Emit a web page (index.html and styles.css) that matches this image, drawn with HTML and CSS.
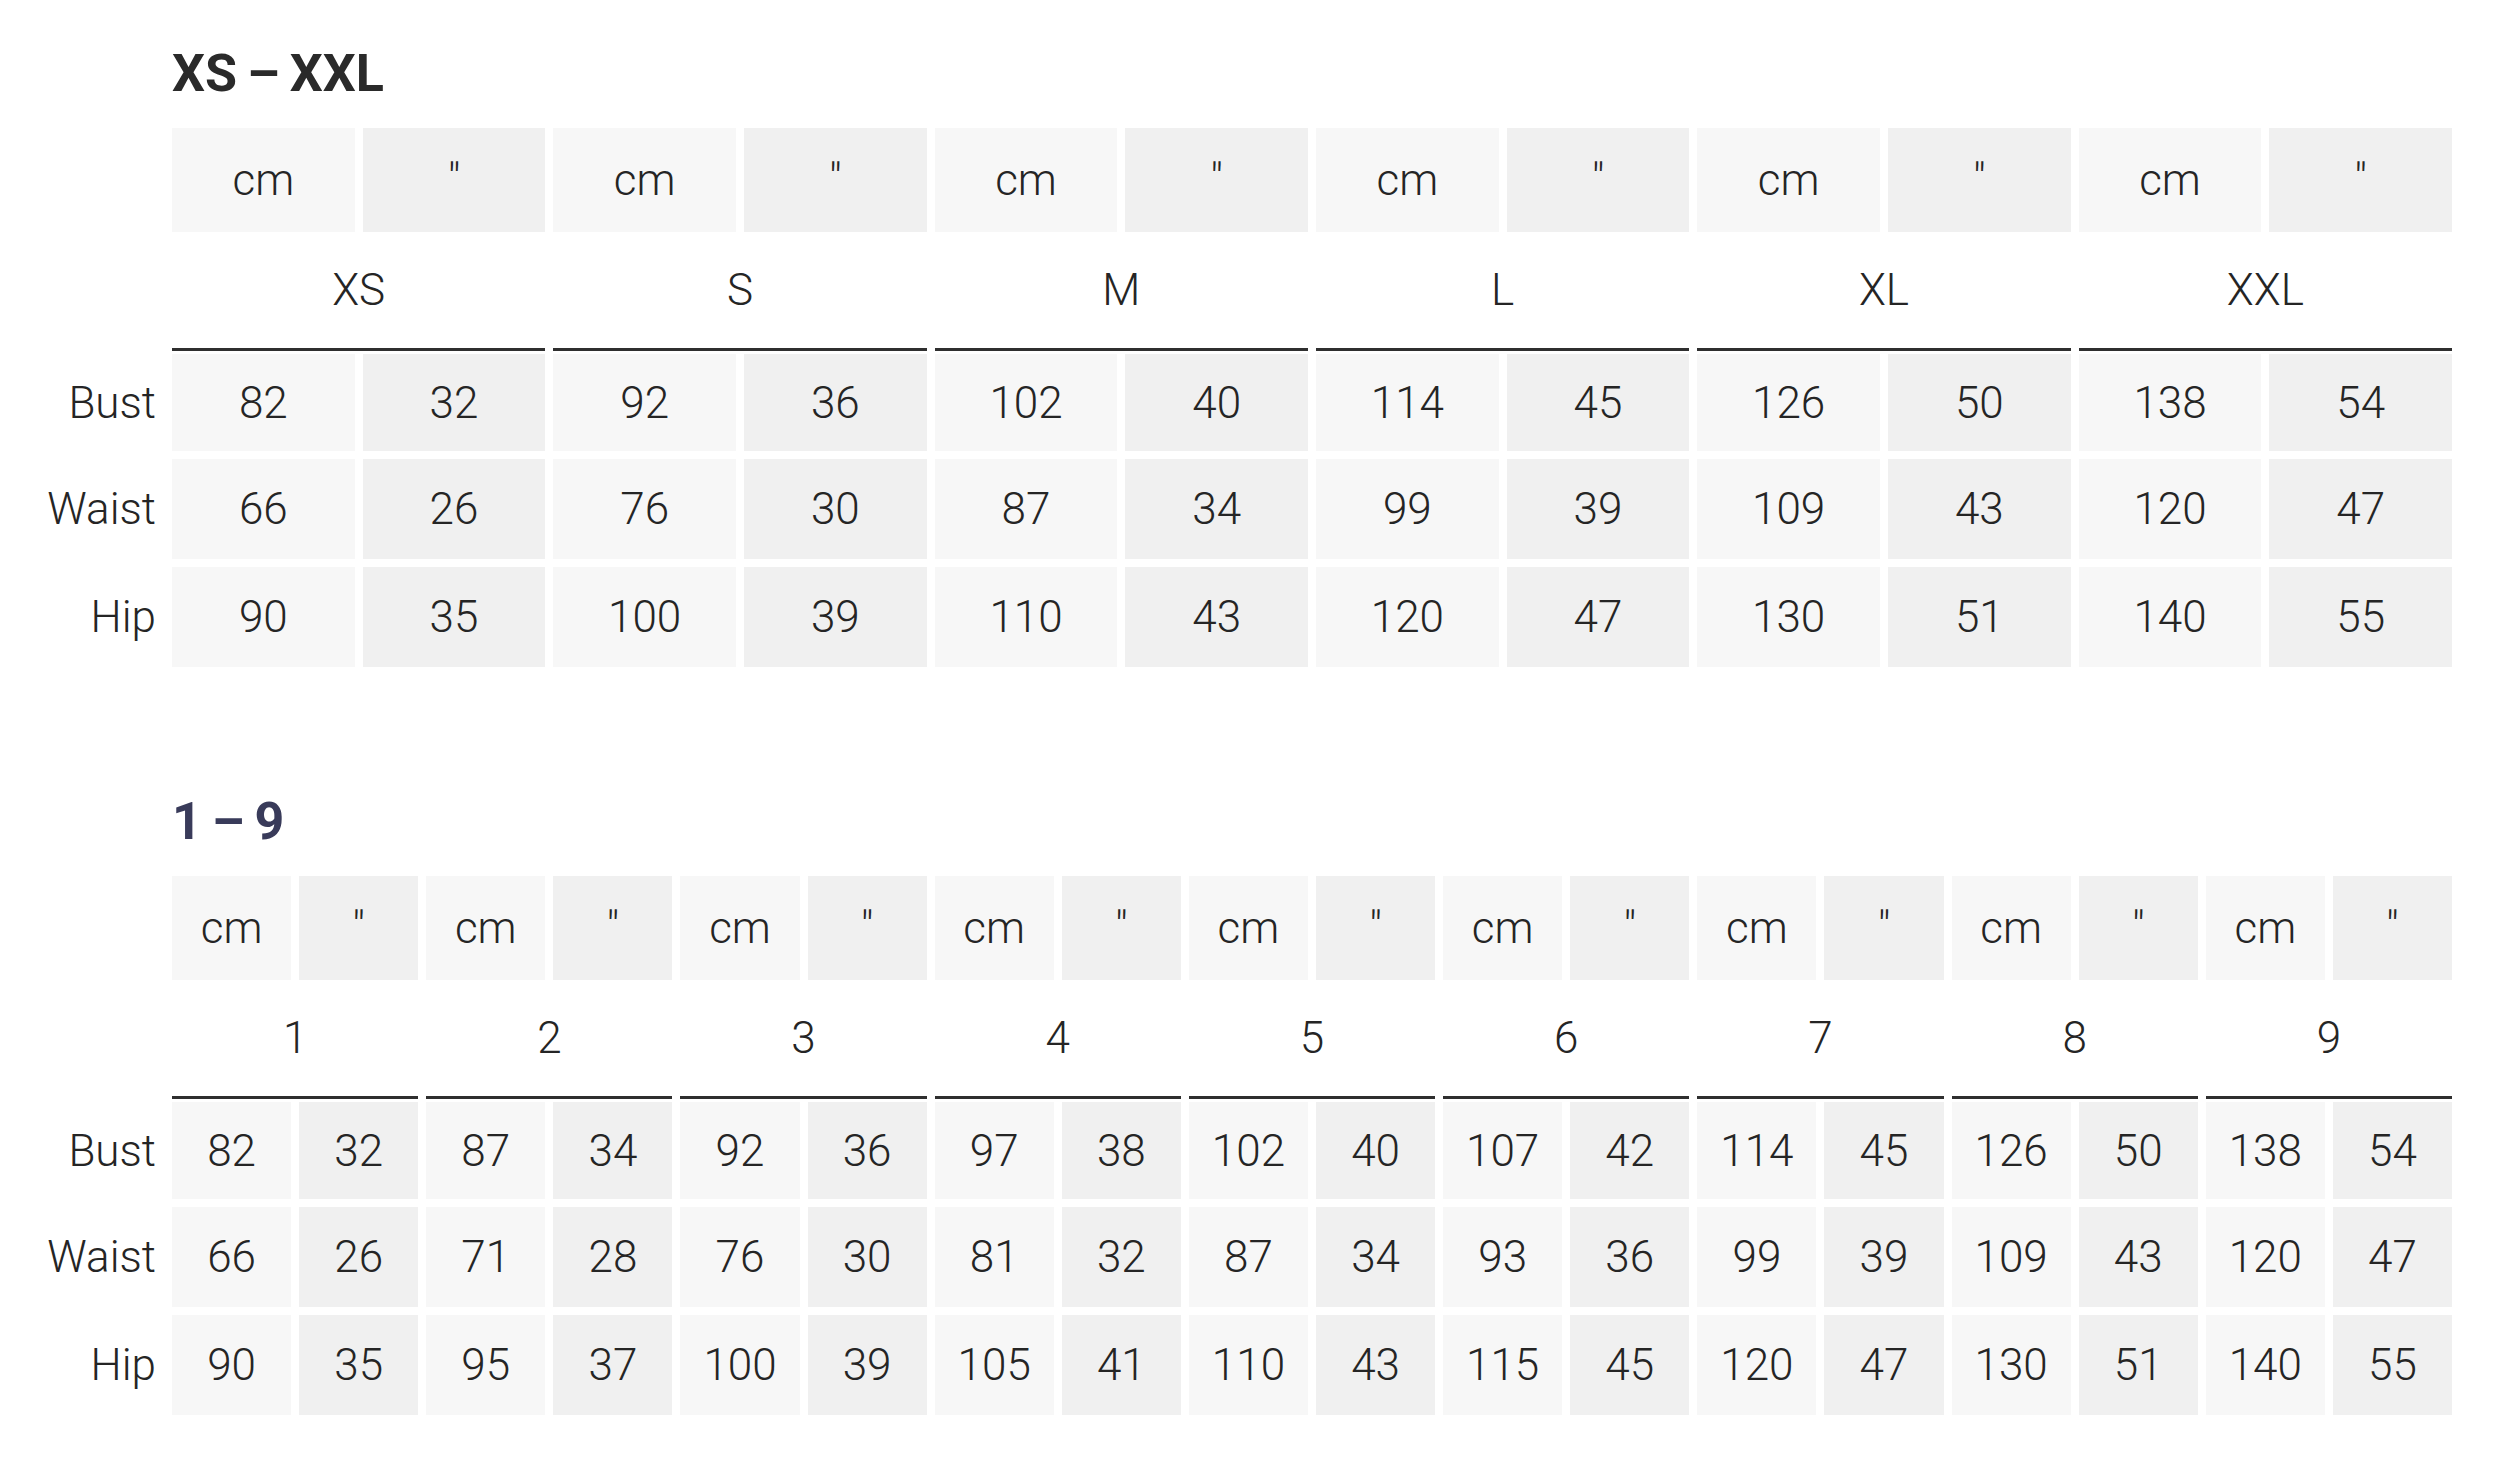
FILE: index.html
```html
<!DOCTYPE html>
<html lang="en">
<head>
<meta charset="utf-8">
<title>Size chart</title>
<link rel="stylesheet" href="styles.css">
</head>
<body>
<main class="page">
  <section class="chart chart--alpha">
    <h2 class="chart-title">XS – XXL</h2>
    <div class="row row--units">
      <span class="row-label"></span>
      <span class="cell cell--cm">cm</span><span class="cell cell--in">"</span>
      <span class="cell cell--cm">cm</span><span class="cell cell--in">"</span>
      <span class="cell cell--cm">cm</span><span class="cell cell--in">"</span>
      <span class="cell cell--cm">cm</span><span class="cell cell--in">"</span>
      <span class="cell cell--cm">cm</span><span class="cell cell--in">"</span>
      <span class="cell cell--cm">cm</span><span class="cell cell--in">"</span>
    </div>
    <div class="row row--sizes">
      <span class="row-label"></span>
      <span class="size">XS</span>
      <span class="size">S</span>
      <span class="size">M</span>
      <span class="size">L</span>
      <span class="size">XL</span>
      <span class="size">XXL</span>
    </div>
    <div class="row row--data row--first">
      <span class="row-label">Bust</span>
      <span class="cell cell--cm">82</span><span class="cell cell--in">32</span>
      <span class="cell cell--cm">92</span><span class="cell cell--in">36</span>
      <span class="cell cell--cm">102</span><span class="cell cell--in">40</span>
      <span class="cell cell--cm">114</span><span class="cell cell--in">45</span>
      <span class="cell cell--cm">126</span><span class="cell cell--in">50</span>
      <span class="cell cell--cm">138</span><span class="cell cell--in">54</span>
    </div>
    <div class="row row--data">
      <span class="row-label">Waist</span>
      <span class="cell cell--cm">66</span><span class="cell cell--in">26</span>
      <span class="cell cell--cm">76</span><span class="cell cell--in">30</span>
      <span class="cell cell--cm">87</span><span class="cell cell--in">34</span>
      <span class="cell cell--cm">99</span><span class="cell cell--in">39</span>
      <span class="cell cell--cm">109</span><span class="cell cell--in">43</span>
      <span class="cell cell--cm">120</span><span class="cell cell--in">47</span>
    </div>
    <div class="row row--data">
      <span class="row-label">Hip</span>
      <span class="cell cell--cm">90</span><span class="cell cell--in">35</span>
      <span class="cell cell--cm">100</span><span class="cell cell--in">39</span>
      <span class="cell cell--cm">110</span><span class="cell cell--in">43</span>
      <span class="cell cell--cm">120</span><span class="cell cell--in">47</span>
      <span class="cell cell--cm">130</span><span class="cell cell--in">51</span>
      <span class="cell cell--cm">140</span><span class="cell cell--in">55</span>
    </div>
  </section>

  <section class="chart chart--num">
    <h2 class="chart-title chart-title--num">1 – 9</h2>
    <div class="row row--units">
      <span class="row-label"></span>
      <span class="cell cell--cm">cm</span><span class="cell cell--in">"</span>
      <span class="cell cell--cm">cm</span><span class="cell cell--in">"</span>
      <span class="cell cell--cm">cm</span><span class="cell cell--in">"</span>
      <span class="cell cell--cm">cm</span><span class="cell cell--in">"</span>
      <span class="cell cell--cm">cm</span><span class="cell cell--in">"</span>
      <span class="cell cell--cm">cm</span><span class="cell cell--in">"</span>
      <span class="cell cell--cm">cm</span><span class="cell cell--in">"</span>
      <span class="cell cell--cm">cm</span><span class="cell cell--in">"</span>
      <span class="cell cell--cm">cm</span><span class="cell cell--in">"</span>
    </div>
    <div class="row row--sizes">
      <span class="row-label"></span>
      <span class="size">1</span>
      <span class="size">2</span>
      <span class="size">3</span>
      <span class="size">4</span>
      <span class="size">5</span>
      <span class="size">6</span>
      <span class="size">7</span>
      <span class="size">8</span>
      <span class="size">9</span>
    </div>
    <div class="row row--data row--first">
      <span class="row-label">Bust</span>
      <span class="cell cell--cm">82</span><span class="cell cell--in">32</span>
      <span class="cell cell--cm">87</span><span class="cell cell--in">34</span>
      <span class="cell cell--cm">92</span><span class="cell cell--in">36</span>
      <span class="cell cell--cm">97</span><span class="cell cell--in">38</span>
      <span class="cell cell--cm">102</span><span class="cell cell--in">40</span>
      <span class="cell cell--cm">107</span><span class="cell cell--in">42</span>
      <span class="cell cell--cm">114</span><span class="cell cell--in">45</span>
      <span class="cell cell--cm">126</span><span class="cell cell--in">50</span>
      <span class="cell cell--cm">138</span><span class="cell cell--in">54</span>
    </div>
    <div class="row row--data">
      <span class="row-label">Waist</span>
      <span class="cell cell--cm">66</span><span class="cell cell--in">26</span>
      <span class="cell cell--cm">71</span><span class="cell cell--in">28</span>
      <span class="cell cell--cm">76</span><span class="cell cell--in">30</span>
      <span class="cell cell--cm">81</span><span class="cell cell--in">32</span>
      <span class="cell cell--cm">87</span><span class="cell cell--in">34</span>
      <span class="cell cell--cm">93</span><span class="cell cell--in">36</span>
      <span class="cell cell--cm">99</span><span class="cell cell--in">39</span>
      <span class="cell cell--cm">109</span><span class="cell cell--in">43</span>
      <span class="cell cell--cm">120</span><span class="cell cell--in">47</span>
    </div>
    <div class="row row--data">
      <span class="row-label">Hip</span>
      <span class="cell cell--cm">90</span><span class="cell cell--in">35</span>
      <span class="cell cell--cm">95</span><span class="cell cell--in">37</span>
      <span class="cell cell--cm">100</span><span class="cell cell--in">39</span>
      <span class="cell cell--cm">105</span><span class="cell cell--in">41</span>
      <span class="cell cell--cm">110</span><span class="cell cell--in">43</span>
      <span class="cell cell--cm">115</span><span class="cell cell--in">45</span>
      <span class="cell cell--cm">120</span><span class="cell cell--in">47</span>
      <span class="cell cell--cm">130</span><span class="cell cell--in">51</span>
      <span class="cell cell--cm">140</span><span class="cell cell--in">55</span>
    </div>
  </section>
</main>
</body>
</html>
```
FILE: styles.css
```css
* {
  box-sizing: border-box;
}

html, body {
  margin: 0;
  padding: 0;
  background: #ffffff;
}

body {
  font-family: Roboto, "Liberation Sans", sans-serif;
  font-weight: 300;
  color: #252525;
}

.page {
  display: flex;
  flex-direction: column;
  gap: 125px;
  padding: 44px 48px 0 0;
}

.chart {
  --cols: 12;
}

.chart--num {
  --cols: 18;
}

.chart-title {
  margin: 0 0 24px 172px;
  height: 60px;
  font-size: 52px;
  line-height: 60px;
  font-weight: 700;
  color: #2a2a2a;
  word-spacing: -3px;
}

.chart-title--num {
  color: #393b5a;
}

.row {
  display: grid;
  grid-template-columns: 164px repeat(var(--cols), minmax(0, 1fr));
  column-gap: 8px;
  font-size: 44px;
}

.row-label {
  display: flex;
  align-items: center;
  justify-content: flex-end;
  padding-right: 8px;
}

.cell {
  display: flex;
  align-items: center;
  justify-content: center;
}

.cell--cm {
  background: #f7f7f7;
}

.cell--in {
  background: #f0f0f0;
}

.row--units {
  height: 104px;
}

.row--sizes {
  height: 111px;
  margin-top: 8px;
}

.size {
  grid-column: span 2;
  display: flex;
  align-items: center;
  justify-content: center;
  padding-bottom: 8px;
  border-bottom: 3px solid #2f2f2f;
}

.row--data {
  height: 100px;
  margin-top: 8px;
}

.row--first {
  height: 97px;
  margin-top: 3px;
}
```
